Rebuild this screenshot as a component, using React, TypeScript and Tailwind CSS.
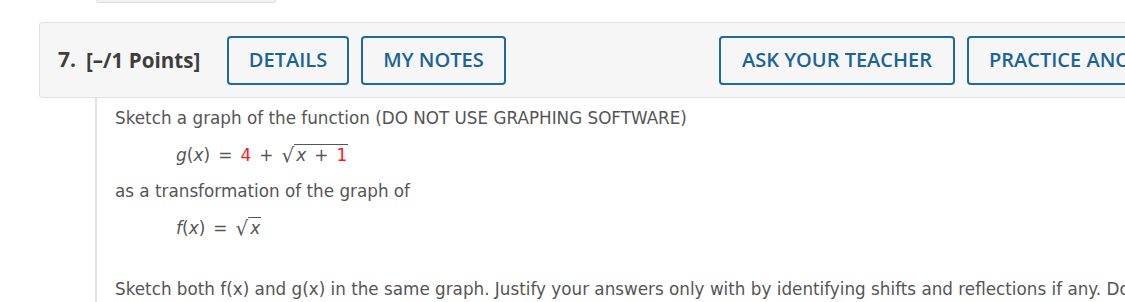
export default function App() {
  const body = { fontFamily: '"DejaVu Sans", Verdana, sans-serif' };
  const head = { fontFamily: '"Open Sans", "DejaVu Sans", sans-serif' };
  const btn = "h-[49px] shrink-0 border-2 border-[#1e6a9e] rounded-[4px] text-[#1a6497] text-[20px] font-semibold whitespace-nowrap";
  return (
    <div className="w-[1125px] h-[302px] overflow-hidden bg-white">
      <div className="ml-[96px] w-[180px] h-[3px] bg-[#f2f2f2] border-x border-b border-[#dcdcdc] rounded-b-[4px]" />
      <div
        className="mt-[19px] ml-[39px] w-[1200px] h-[76px] flex items-center bg-[#f6f6f6] border border-[#e2e2e2] rounded-[3px] pl-[18px]"
        style={head}
      >
        <div className="w-[169px] shrink-0 flex items-center text-[#3d3d3d] font-bold whitespace-nowrap">
          <span className="text-[21px]">7.</span>
          <span className="ml-[10px] text-[20.6px]">[–/1 Points]</span>
        </div>
        <div className="flex items-center gap-[12px]">
          <button className={btn + " w-[122px]"}>DETAILS</button>
          <button className={btn + " w-[145px]"}>MY NOTES</button>
        </div>
        <div className="ml-[213px] flex items-center gap-[12px]">
          <button className={btn + " w-[236px]"}>ASK YOUR TEACHER</button>
          <button className={btn + " w-[260px] text-left pl-[20px]"}>PRACTICE ANOTHER</button>
        </div>
      </div>
      <div className="ml-[95px] border-l-2 border-[#e2e2e2] pl-[18px] h-[210px] text-[#555555] text-[16.8px]" style={body}>
        <div className="pt-[10px] leading-[20px] whitespace-nowrap">Sketch a graph of the function (DO NOT USE GRAPHING SOFTWARE)</div>
        <div className="mt-[15px] ml-[61px] leading-[24px] whitespace-nowrap flex items-end text-[17px]">
          <span className="italic">g</span>
          <span>(<span className="italic">x</span>)</span>
          <span className="ml-[8px]">=</span>
          <span className="text-[#ff1a1a] ml-[8px]">4</span>
          <span className="ml-[8px]">+</span>
          <span className="ml-[8px] text-[20px] leading-[24px]">√</span>
          <span className="border-t border-[#555555] pl-[2px] pr-[1px] leading-[21px] mb-[1px]">
            <span className="italic">x</span><span className="ml-[8px]">+</span><span className="ml-[8px] text-[#ff1a1a]">1</span>
          </span>
        </div>
        <div className="mt-[14px] leading-[20px] whitespace-nowrap">as a transformation of the graph of</div>
        <div className="mt-[15px] ml-[61px] leading-[24px] whitespace-nowrap flex items-end text-[17px]">
          <span className="italic">f</span>
          <span>(<span className="italic">x</span>)</span>
          <span className="ml-[8px]">=</span>
          <span className="ml-[8px] text-[20px] leading-[24px]">√</span>
          <span className="border-t border-[#555555] pl-[2px] pr-[1px] leading-[21px] mb-[1px]"><span className="italic">x</span></span>
        </div>
        <div className="mt-[39px] leading-[20px] whitespace-nowrap">Sketch both f(x) and g(x) in the same graph. Justify your answers only with by identifying shifts and reflections if any. Do not use graphing software.</div>
      </div>
    </div>
  );
}
